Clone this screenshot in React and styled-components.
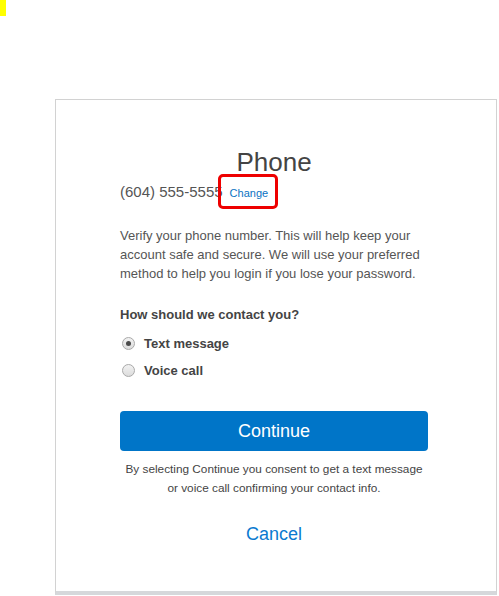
import React, { useState } from "react";
import styled, { createGlobalStyle } from "styled-components";

const GlobalStyle = createGlobalStyle`
  html, body {
    margin: 0;
    padding: 0;
    background: #fff;
    font-family: "Liberation Sans", Arial, sans-serif;
  }
`;

const Page = styled.div`
  display: flex;
  flex-direction: column;
  align-items: flex-start;
`;

const Marker = styled.div`
  width: 6px;
  height: 16px;
  background: #ffff00;
`;

const Card = styled.div`
  box-sizing: border-box;
  width: 442px;
  margin: 83px 0 0 55px;
  padding: 47px 0 45px 64px;
  border: 1px solid #d2d2d2;
  border-bottom: 4px solid #d6d8db;
  background: #fff;
`;

const Content = styled.div`
  width: 308px;
  display: flex;
  flex-direction: column;
  color: #555;
`;

const Title = styled.h1`
  margin: 0;
  font-size: 26px;
  line-height: 30px;
  font-weight: 400;
  text-align: center;
  color: #444;
`;

const PhoneRow = styled.div`
  margin-top: 5px;
  font-size: 15px;
  line-height: 20px;
  color: #555;
`;

const ChangeLink = styled.a`
  position: relative;
  margin-left: 7px;
  font-size: 11px;
  color: #0a72c2;
  text-decoration: none;
  cursor: pointer;

  &::after {
    content: "";
    position: absolute;
    left: -12px;
    right: -10px;
    top: -13px;
    bottom: -10px;
    border: 3px solid #ee0000;
    border-radius: 5px;
  }
`;

const Intro = styled.p`
  margin: 23px 0 0;
  font-size: 13px;
  line-height: 19px;
  color: #555;
`;

const Question = styled.div`
  margin-top: 22px;
  font-size: 13px;
  line-height: 19px;
  font-weight: 700;
  color: #444;
`;

const Options = styled.div`
  margin-top: 10px;
  display: flex;
  flex-direction: column;
  gap: 8px;
`;

const Option = styled.label`
  display: flex;
  align-items: center;
  gap: 9px;
  font-size: 13px;
  line-height: 19px;
  font-weight: 700;
  color: #444;
  cursor: pointer;
`;

const Radio = styled.span`
  box-sizing: border-box;
  width: 13px;
  height: 13px;
  margin-left: 2px;
  border-radius: 50%;
  border: 1px solid #a9a9a9;
  background: linear-gradient(#f2f2f2, #dcdcdc);
  display: flex;
  align-items: center;
  justify-content: center;

  &::after {
    content: "";
    width: 5px;
    height: 5px;
    border-radius: 50%;
    background: ${(p) => (p.$checked ? "#4a4a4a" : "transparent")};
  }
`;

const ContinueButton = styled.button`
  margin-top: 31px;
  height: 40px;
  width: 100%;
  border: none;
  border-radius: 4px;
  background: #0075c8;
  color: #fff;
  font-family: inherit;
  font-size: 18px;
  cursor: pointer;
`;

const Consent = styled.p`
  margin: 9px 0 0;
  font-size: 11.8px;
  line-height: 19px;
  text-align: center;
  color: #444;
`;

const CancelLink = styled.a`
  margin-top: 24px;
  font-size: 18px;
  line-height: 24px;
  text-align: center;
  color: #0a7ad0;
  text-decoration: none;
  cursor: pointer;
`;

export default function App() {
  const [method, setMethod] = useState("text");

  return (
    <>
      <GlobalStyle />
      <Page>
        <Marker />
        <Card>
          <Content>
            <Title>Phone</Title>
            <PhoneRow>
              (604) 555-5555
              <ChangeLink>Change</ChangeLink>
            </PhoneRow>
            <Intro>
              Verify your phone number. This will help keep your account safe
              and secure. We will use your preferred method to help you login
              if you lose your password.
            </Intro>
            <Question>How should we contact you?</Question>
            <Options>
              <Option onClick={() => setMethod("text")}>
                <Radio $checked={method === "text"} />
                Text message
              </Option>
              <Option onClick={() => setMethod("voice")}>
                <Radio $checked={method === "voice"} />
                Voice call
              </Option>
            </Options>
            <ContinueButton>Continue</ContinueButton>
            <Consent>
              By selecting Continue you consent to get a text message or voice
              call confirming your contact info.
            </Consent>
            <CancelLink>Cancel</CancelLink>
          </Content>
        </Card>
      </Page>
    </>
  );
}
